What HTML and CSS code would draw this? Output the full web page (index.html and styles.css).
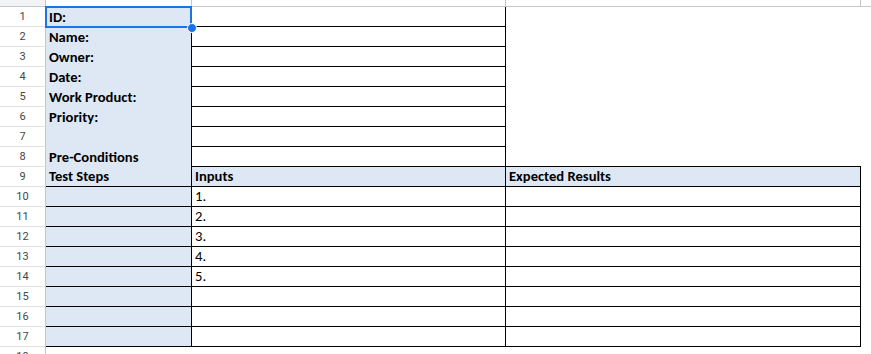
FILE: index.html
```html
<!DOCTYPE html>
<html lang="en">
<head>
  <meta charset="UTF-8" />
  <title>Test Case Template</title>
  <link rel="stylesheet" href="styles.css">
</head>
<body>
  <div class="sheet">
    <!-- column header strip -->
    <div class="corner"></div>
    <div class="colhead"></div>
    <div class="colhead"></div>
    <div class="colhead"></div>
    <div class="colhead last"></div>

    <div class="rownum">1</div>
    <div class="cell label selected">ID:<span class="handle"></span></div>
    <div class="cell value"></div>
    <div class="cell blank"></div>
    <div class="cell blank"></div>

    <div class="rownum">2</div>
    <div class="cell label">Name:</div>
    <div class="cell value"></div>
    <div class="cell blank"></div>
    <div class="cell blank"></div>

    <div class="rownum">3</div>
    <div class="cell label">Owner:</div>
    <div class="cell value"></div>
    <div class="cell blank"></div>
    <div class="cell blank"></div>

    <div class="rownum">4</div>
    <div class="cell label">Date:</div>
    <div class="cell value"></div>
    <div class="cell blank"></div>
    <div class="cell blank"></div>

    <div class="rownum">5</div>
    <div class="cell label">Work Product:</div>
    <div class="cell value"></div>
    <div class="cell blank"></div>
    <div class="cell blank"></div>

    <div class="rownum">6</div>
    <div class="cell label">Priority:</div>
    <div class="cell value"></div>
    <div class="cell blank"></div>
    <div class="cell blank"></div>

    <div class="rownum">7</div>
    <div class="cell label"></div>
    <div class="cell value"></div>
    <div class="cell blank"></div>
    <div class="cell blank"></div>

    <div class="rownum">8</div>
    <div class="cell label">Pre-Conditions</div>
    <div class="cell value"></div>
    <div class="cell blank ruled"></div>
    <div class="cell blank"></div>

    <div class="rownum">9</div>
    <div class="cell label boxed">Test Steps</div>
    <div class="cell value shaded">Inputs</div>
    <div class="cell result shaded">Expected Results</div>
    <div class="cell blank"></div>

    <div class="rownum">10</div>
    <div class="cell label boxed"></div>
    <div class="cell value">1.</div>
    <div class="cell result"></div>
    <div class="cell blank"></div>

    <div class="rownum">11</div>
    <div class="cell label boxed"></div>
    <div class="cell value">2.</div>
    <div class="cell result"></div>
    <div class="cell blank"></div>

    <div class="rownum">12</div>
    <div class="cell label boxed"></div>
    <div class="cell value">3.</div>
    <div class="cell result"></div>
    <div class="cell blank"></div>

    <div class="rownum">13</div>
    <div class="cell label boxed"></div>
    <div class="cell value">4.</div>
    <div class="cell result"></div>
    <div class="cell blank"></div>

    <div class="rownum">14</div>
    <div class="cell label boxed"></div>
    <div class="cell value">5.</div>
    <div class="cell result"></div>
    <div class="cell blank"></div>

    <div class="rownum">15</div>
    <div class="cell label boxed"></div>
    <div class="cell value"></div>
    <div class="cell result"></div>
    <div class="cell blank"></div>

    <div class="rownum">16</div>
    <div class="cell label boxed"></div>
    <div class="cell value"></div>
    <div class="cell result"></div>
    <div class="cell blank"></div>

    <div class="rownum">17</div>
    <div class="cell label boxed"></div>
    <div class="cell value"></div>
    <div class="cell result"></div>
    <div class="cell blank"></div>

    <div class="rownum">18</div>
    <div class="cell blank"></div>
    <div class="cell blank"></div>
    <div class="cell blank"></div>
    <div class="cell blank"></div>
  </div>
</body>
</html>
```

FILE: styles.css
```css
body {
  margin: 0;
  background: #fff;
  overflow: hidden;
}

.sheet {
  display: grid;
  grid-template-columns: 46px 146px 314px 355px 1fr;
  grid-template-rows: 7px repeat(18, 20px);
  font-family: Carlito, Lato, "Liberation Sans", sans-serif;
  font-size: 14.6px;
  color: #000;
}

/* header strip along the top */
.corner {
  background: #f1f3f4;
  border-right: 1px solid #c4c7c5;
  border-bottom: 1px solid #c4c7c5;
}

.colhead {
  background: #fff;
  border-right: 1px solid #c4c7c5;
  border-bottom: 1px solid #c4c7c5;
}

.colhead.last {
  border-right: none;
}

.rownum {
  display: flex;
  align-items: center;
  justify-content: center;
  font-family: Roboto, sans-serif;
  font-size: 11px;
  color: #444746;
  border-right: 1px solid #c4c7c5;
  border-bottom: 1px solid #e1e3e1;
  box-sizing: border-box;
}

.cell {
  display: flex;
  align-items: flex-end;
  padding: 0 3px 1px;
  box-sizing: border-box;
  white-space: nowrap;
  overflow: hidden;
}

.label {
  background: #dde8f4;
  font-weight: bold;
  border-right: 1px solid #000;
}

.label.boxed {
  border-bottom: 1px solid #000;
}

.value {
  border-right: 1px solid #000;
  border-bottom: 1px solid #000;
}

.result {
  border-right: 1px solid #000;
  border-bottom: 1px solid #000;
}

.shaded {
  background: #dde8f4;
  font-weight: bold;
}

.blank.ruled {
  border-bottom: 1px solid #000;
}

/* active cell outline with its fill handle */
.selected {
  position: relative;
  overflow: visible;
}

.selected::after {
  content: "";
  position: absolute;
  left: -1px;
  top: -1px;
  right: -1px;
  bottom: -1px;
  border: 2px solid #1a73e8;
}

.handle {
  position: absolute;
  right: -6px;
  bottom: -6px;
  width: 8px;
  height: 8px;
  border-radius: 50%;
  background: #1a73e8;
  border: 1px solid #fff;
  z-index: 2;
}
```
